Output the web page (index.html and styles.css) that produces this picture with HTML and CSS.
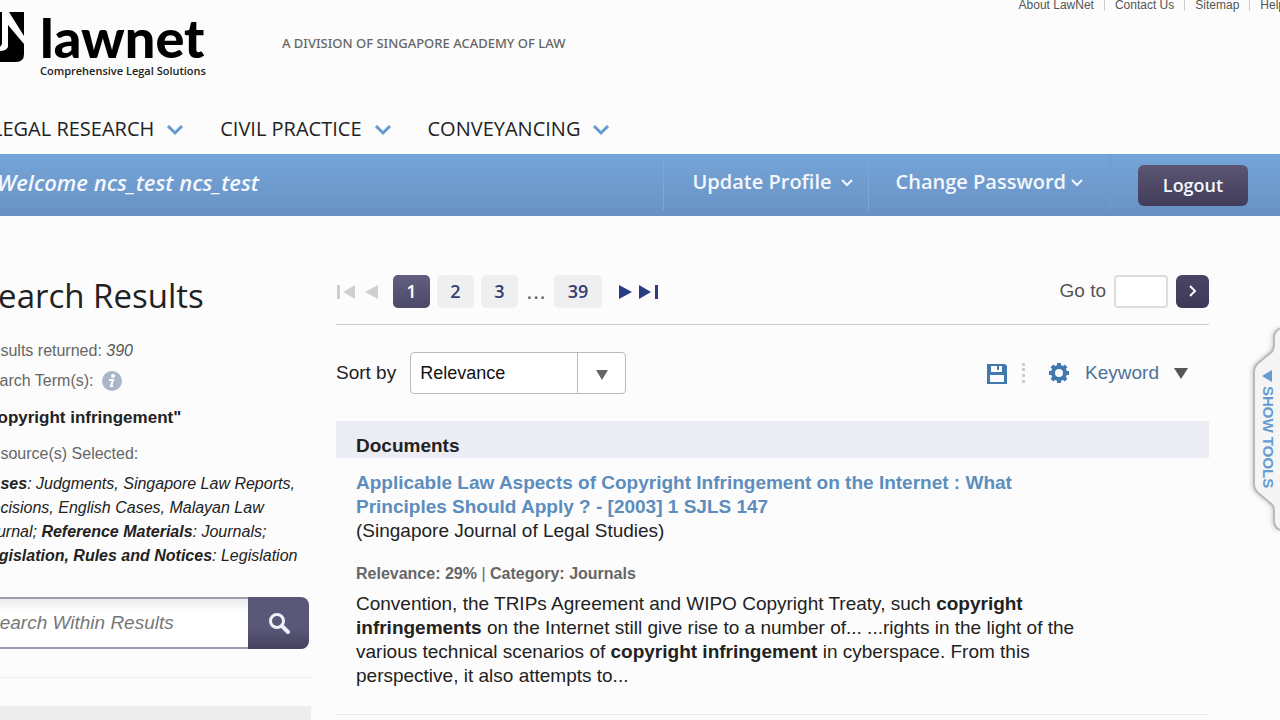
FILE: index.html
```html
<!DOCTYPE html>
<html lang="en">
<head>
<meta charset="utf-8">
<title>LawNet - Search Results</title>
<link rel="stylesheet" href="styles.css">
</head>
<body>
<div class="page">
  <header class="header">
    <a class="brand" href="#">
      <svg class="brand-mark" width="44" height="50" viewBox="0 0 44 50" aria-hidden="true">
        <path d="M0 0H22V32L20 35V39Q26 39 28 35V13L44 32V42Q44 50 36 50H0Z"/>
        <path d="M29 0H44V24Z"/>
      </svg>
      <span class="brand-text">
        <span class="brand-name">lawnet</span>
        <span class="brand-tag">Comprehensive Legal Solutions</span>
      </span>
    </a>
    <p class="division">A DIVISION OF SINGAPORE ACADEMY OF LAW</p>
    <nav class="utility" aria-label="Utility">
      <a href="#">About LawNet</a><a href="#">Contact Us</a><a href="#">Sitemap</a><a href="#">Help</a>
    </nav>
  </header>

  <nav class="main-nav" aria-label="Main">
    <a href="#">LEGAL RESEARCH <svg width="18" height="13" viewBox="0 0 18 13"><path d="M2 3l7 7 7-7"/></svg></a>
    <a href="#">CIVIL PRACTICE <svg width="18" height="13" viewBox="0 0 18 13"><path d="M2 3l7 7 7-7"/></svg></a>
    <a href="#">CONVEYANCING <svg width="18" height="13" viewBox="0 0 18 13"><path d="M2 3l7 7 7-7"/></svg></a>
  </nav>

  <div class="user-bar">
    <p class="welcome">Welcome ncs_test ncs_test</p>
    <a class="user-link profile" href="#">Update Profile <svg width="12" height="9" viewBox="0 0 12 9"><path d="M1 2l5 5 5-5"/></svg></a>
    <a class="user-link password" href="#">Change Password <svg width="12" height="9" viewBox="0 0 12 9"><path d="M1 2l5 5 5-5"/></svg></a>
    <button class="logout" type="button">Logout</button>
  </div>

  <div class="content">
    <aside class="sidebar">
      <h1>Search Results</h1>
      <p class="fact">Results returned: <em>390</em></p>
      <p class="fact">Search Term(s):
        <svg class="info" width="20" height="20" viewBox="0 0 20 20" aria-hidden="true"><circle cx="10" cy="10" r="10" fill="#a9b5c9"/><circle cx="11" cy="5" r="2" fill="#fff"/><path d="M7 9h4l-2 6h2" fill="none" stroke="#fff" stroke-width="2"/></svg>
      </p>
      <p class="term">"copyright infringement"</p>
      <p class="fact">Resource(s) Selected:</p>
      <p class="sources"><b>Cases</b>: Judgments, Singapore Law Reports,<br>Decisions, English Cases, Malayan Law<br>Journal; <b>Reference Materials</b>: Journals;<br><b>Legislation, Rules and Notices</b>: Legislation</p>
      <form class="within">
        <input type="text" aria-label="Search Within Results" placeholder="Search Within Results">
        <button type="button" aria-label="Search"><svg width="22" height="22" viewBox="0 0 22 22"><circle cx="9" cy="9" r="6.5" fill="none" stroke="#eef0fa" stroke-width="3"/><path d="M14 14l6 6" stroke="#eef0fa" stroke-width="4" stroke-linecap="round"/></svg></button>
      </form>
      <div class="panel"></div>
    </aside>

    <main class="results">
      <div class="pager">
        <nav class="pages" aria-label="Pages">
          <a class="step off" href="#" aria-label="First page"><svg width="20" height="14" viewBox="0 0 20 14"><path d="M1 0h3v14H1zM19 0v14L7 7z"/></svg></a>
          <a class="step off" href="#" aria-label="Previous page"><svg width="15" height="14" viewBox="0 0 15 14"><path d="M15 0v14L2 7z"/></svg></a>
          <a class="num current" href="#">1</a>
          <a class="num" href="#">2</a>
          <a class="num" href="#">3</a>
          <span class="dots">...</span>
          <a class="num wide" href="#">39</a>
          <a class="step next" href="#" aria-label="Next page"><svg width="13" height="14" viewBox="0 0 13 14"><path d="M0 0v14l13-7z"/></svg></a>
          <a class="step" href="#" aria-label="Last page"><svg width="20" height="14" viewBox="0 0 20 14"><path d="M0 0v14l12-7zM16 0h3v14h-3z"/></svg></a>
        </nav>
        <form class="goto">
          <label for="goto">Go to</label>
          <input id="goto" type="text">
          <button type="button" aria-label="Go"><svg width="10" height="12" viewBox="0 0 10 12"><path d="M2 1l5 5-5 5" fill="none" stroke="#fff" stroke-width="2"/></svg></button>
        </form>
      </div>

      <div class="tools">
        <label for="sort">Sort by</label>
        <span class="select"><select id="sort"><option>Relevance</option></select></span>
        <button class="save" type="button" aria-label="Save"><svg width="20" height="20" viewBox="0 0 20 20"><path fill="#4278ad" fill-rule="evenodd" d="M0 0H18L20 2V20H0ZM3 11V18H17V11ZM4 2V8H15V2Z"/><path fill="#4278ad" d="M10 2h2v4h-2z"/></svg></button>
        <span class="grip"></span>
        <button class="keyword" type="button">
          <svg width="22" height="22" viewBox="-11 -11 22 22"><g fill="#4278ad"><path d="M-2-10H2V10H-2zM-10-2H10V2H-10z"/><path d="M-2-10H2V10H-2zM-10-2H10V2H-10z" transform="rotate(45)"/><circle r="8"/></g><circle r="4" fill="#fcfcfc"/></svg>
          <span>Keyword</span>
          <svg width="14" height="11" viewBox="0 0 14 11"><path d="M0 0h14L7 11z" fill="#555"/></svg>
        </button>
      </div>

      <h2>Documents</h2>
      <article class="hit">
        <h3><a href="#">Applicable Law Aspects of Copyright Infringement on the Internet : What<br>Principles Should Apply ? - [2003] 1 SJLS 147</a></h3>
        <p class="journal">(Singapore Journal of Legal Studies)</p>
        <p class="meta"><b>Relevance: 29%</b> | <b>Category: Journals</b></p>
        <p class="snippet">Convention, the TRIPs Agreement and WIPO Copyright Treaty, such <b>copyright<br>infringements</b> on the Internet still give rise to a number of... ...rights in the light of the<br>various technical scenarios of <b>copyright infringement</b> in cyberspace. From this<br>perspective, it also attempts to...</p>
      </article>
    </main>
  </div>

  <button class="show-tools" type="button">
    <svg width="28" height="206" viewBox="0 0 28 206" aria-hidden="true"><path d="M28 2Q23 5 22 10V20Q21 26 17 28L5 38Q2 41 2 46V158Q2 163 5 166L18 177Q22 179 22 185V196Q23 202 28 204" fill="#f5f5f6" stroke="#b9b9bb" stroke-width="2"/><path d="M20 44v12L10 50z" fill="#659bce"/></svg>
    <span>SHOW TOOLS</span>
  </button>
</div>
</body>
</html>
```

FILE: styles.css
```css
* { box-sizing: border-box; }
body {
  margin: 0;
  overflow: hidden;
  background: #fcfcfc;
  color: #222;
  font: 18px/24px "Liberation Sans", Arial, sans-serif;
}
h1, h2, h3, p { margin: 0; font-weight: normal; }
a { color: inherit; text-decoration: none; }
button, input, select { font: inherit; color: inherit; }
button { padding: 0; border: 0; background: none; cursor: pointer; }

/* The page is wider than the window on both sides */
.page { position: relative; margin: 0 -20px; }

.header { display: flex; align-items: flex-start; height: 104px; }
.brand { display: flex; gap: 16px; padding-top: 12px; color: #000; }
.brand-text { display: flex; flex-direction: column; }
.brand-name { height: 52px; font: 900 54px/52px Lato, sans-serif; }
.brand-tag { font: 600 11px/14px "Open Sans", sans-serif; color: #222; }
.division { margin-left: 76px; padding-top: 31px; font: 500 13px/24px "Noto Sans", sans-serif; color: #666; }
.utility { display: flex; margin: -1px 0 0 auto; padding-right: 5px; font-size: 12px; line-height: 12px; color: #555; }
.utility a { padding: 0 10px; border-left: 1px solid #ccc; }
.utility a:first-child { border-left: 0; }

.main-nav { display: flex; gap: 36px; height: 50px; padding-left: 12px; font: 20px/50px "Open Sans", sans-serif; color: #222; }
.main-nav a { display: flex; align-items: center; gap: 12px; }
.main-nav path { fill: none; stroke: #659bd2; stroke-width: 3; }

.user-bar {
  display: flex;
  height: 62px;
  padding: 0 52px 0 17px;
  background: linear-gradient(#74a5d9, #6991c3);
  font: 600 20px/56px "Open Sans", sans-serif;
  color: #f4f7fc;
}
.welcome { margin-right: auto; font-size: 22px; font-weight: 600; font-style: italic; }
.user-link { display: flex; align-items: center; gap: 9px; height: 56px; }
.user-link path { fill: none; stroke: #f4f7fc; stroke-width: 2; }
.profile { padding: 0 15px 0 28px; border-left: 1px solid #7ba7d9; }
.password { padding: 0 27px; border-left: 1px solid #7ba7d9; border-right: 1px solid #6f9bcd; gap: 5px; }
.logout {
  align-self: center;
  width: 110px;
  height: 41px;
  margin-left: 27px;
  border-radius: 6px;
  background: linear-gradient(#5c5675, #413c59);
  font-size: 18px;
  line-height: 40px;
}

.content { display: grid; grid-template-columns: 331px 1fr; gap: 25px; padding-right: 91px; }

.sidebar { padding-top: 56px; font-size: 16px; }
.sidebar h1 { margin-bottom: 19px; font: 33px/48px "Open Sans", sans-serif; color: #222; }
.fact { margin-bottom: 6px; color: #666; }
.fact em { color: #555; }
.info { margin-left: 4px; vertical-align: -5px; }
.term { margin: 13px 0 12px; font-size: 17px; font-weight: bold; }
.sources { font-style: italic; }
.within { display: flex; height: 52px; margin: 29px 2px 28px 0; }
.within input {
  flex: 1;
  min-width: 0;
  padding: 0 0 0 5px;
  border: 2px solid #9a9db0;
  border-right: 0;
  background: linear-gradient(#ececf0, #fff 14px);
  font-size: 19px;
  font-style: italic;
}
.within input::placeholder { color: #777; opacity: 1; }
.within button { display: grid; place-items: center; width: 61px; border-radius: 0 8px 8px 0; background: linear-gradient(#5a5878 60%, #45415f); }
.panel { height: 60px; border-top: 1px solid #eee; background: linear-gradient(#fcfcfc 28px, #ededee 28px); }

.results { padding-top: 59px; }
.pager, .pages, .goto, .tools, .keyword { display: flex; align-items: center; }
.pager { justify-content: space-between; height: 50px; padding-bottom: 17px; border-bottom: 1px solid #ccc; }
.pages { gap: 7px; }
.step { display: flex; padding-top: 1px; color: #283d80; }
.step svg { fill: currentColor; }
.off { color: #cfcfcf; }
.off + .current { margin-left: 8px; }
.next { margin-left: 10px; }
.num { width: 37px; height: 33px; border-radius: 5px; background: #efeff1; font: 600 18px/33px "Open Sans", sans-serif; text-align: center; color: #343d70; }
.wide { width: 48px; }
.current { background: linear-gradient(#615e80, #4b4868); color: #fff; }
.dots { padding: 0 1px; font-size: 24px; color: #666; }
.goto { gap: 8px; font-size: 19px; color: #555; }
.goto input { width: 54px; height: 33px; border: 2px solid #ddd; border-radius: 4px; background: #fff; }
.goto button { display: grid; place-items: center; width: 33px; height: 33px; border-radius: 6px; background: linear-gradient(#4a4566, #3d3857); }

.tools { margin: 27px 0; padding-right: 21px; font-size: 19px; }
.select { position: relative; width: 216px; margin-left: 14px; }
.select select { display: block; width: 100%; height: 42px; padding: 0 9px; border: 1px solid #bbb; border-radius: 4px; background: #fff; appearance: none; color: #111; font-size: 18px; }
.select::before { content: ""; position: absolute; top: 1px; bottom: 1px; right: 48px; width: 1px; background: #bbb; }
.select::after { content: ""; position: absolute; top: 18px; right: 18px; border: 6px solid transparent; border-top: 10px solid #666; border-bottom: 0; }
.save { display: flex; margin-left: auto; padding-top: 2px; }
.grip { height: 20px; margin: 0 23px 0 15px; border-left: 3px dotted #ccc; }
.keyword { gap: 15px; color: #4d7199; }

h2 { height: 37px; padding-left: 20px; background: #ececf4; font-size: 19px; font-weight: bold; line-height: 50px; }
.hit { padding: 13px 0 26px 20px; border-bottom: 1px solid #e6e6e6; }
.hit h3 { font-size: 19px; font-weight: bold; color: #5c8dbd; }
.journal, .snippet { font-size: 19px; }
.meta { margin: 19px 0 6px; font-size: 16px; color: #666; }

.show-tools { position: absolute; top: 326px; right: 20px; width: 28px; height: 206px; }
.show-tools svg { display: block; filter: drop-shadow(-1px 0 2px #ccc); }
.show-tools span { position: absolute; top: 60px; left: 4px; writing-mode: vertical-rl; font-size: 15px; font-weight: bold; color: #659bce; }
```
